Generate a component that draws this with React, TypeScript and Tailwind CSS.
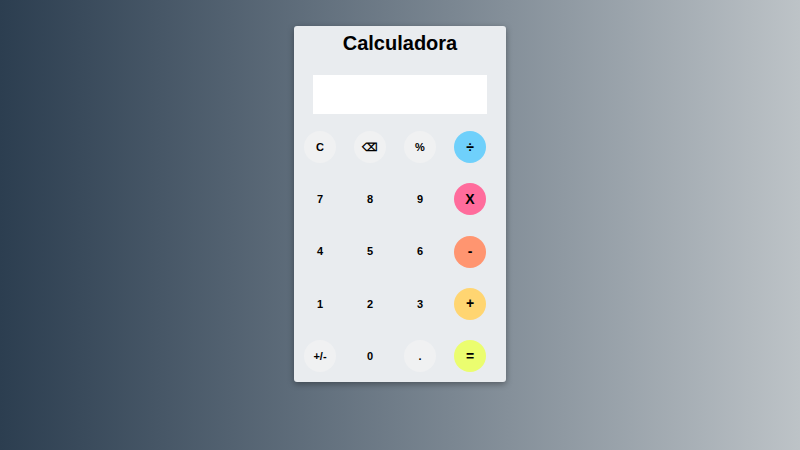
import React from 'react';

type Key = { label: string; kind: 'light' | 'plain' | 'op'; color?: string };

const keys: Key[] = [
  { label: 'C', kind: 'light' },
  { label: '⌫', kind: 'light' },
  { label: '%', kind: 'light' },
  { label: '÷', kind: 'op', color: 'bg-[#6fd0fb]' },
  { label: '7', kind: 'plain' },
  { label: '8', kind: 'plain' },
  { label: '9', kind: 'plain' },
  { label: 'X', kind: 'op', color: 'bg-[#ff6c9c]' },
  { label: '4', kind: 'plain' },
  { label: '5', kind: 'plain' },
  { label: '6', kind: 'plain' },
  { label: '-', kind: 'op', color: 'bg-[#ff9570]' },
  { label: '1', kind: 'plain' },
  { label: '2', kind: 'plain' },
  { label: '3', kind: 'plain' },
  { label: '+', kind: 'op', color: 'bg-[#ffd571]' },
  { label: '+/-', kind: 'light' },
  { label: '0', kind: 'plain' },
  { label: '.', kind: 'light' },
  { label: '=', kind: 'op', color: 'bg-[#ebfd6f]' },
];

export default function App() {
  return (
    <div
      className="w-full h-[450px] flex justify-center pt-[26px] bg-gradient-to-r from-[#2c3e50] to-[#bdc3c7]"
      style={{ fontFamily: '"Liberation Sans", Arial, sans-serif' }}
    >
      <div className="w-[212px] h-[356px] bg-[#e9ecef] rounded-[3px] shadow-[0_2px_6px_rgba(0,0,0,0.35)] pt-[5px]">
        <h1 className="text-center text-[20px] leading-[24px] font-bold text-black">Calculadora</h1>
        <div className="mx-[19px] mt-[20px] h-[39px] bg-white"></div>
        <div className="mt-[17px] pl-[10px] grid grid-cols-[repeat(4,32px)] gap-x-[18px] gap-y-[20.25px]">
          {keys.map((k) => (
            <button
              key={k.label}
              className={
                'w-[32px] h-[32px] rounded-full flex items-center justify-center font-bold text-black ' +
                (k.kind === 'op'
                  ? 'text-[14px] ' + k.color
                  : k.kind === 'light'
                  ? 'text-[11px] bg-[#f0f1f2]'
                  : 'text-[11px]')
              }
            >
              {k.label}
            </button>
          ))}
        </div>
      </div>
    </div>
  );
}
